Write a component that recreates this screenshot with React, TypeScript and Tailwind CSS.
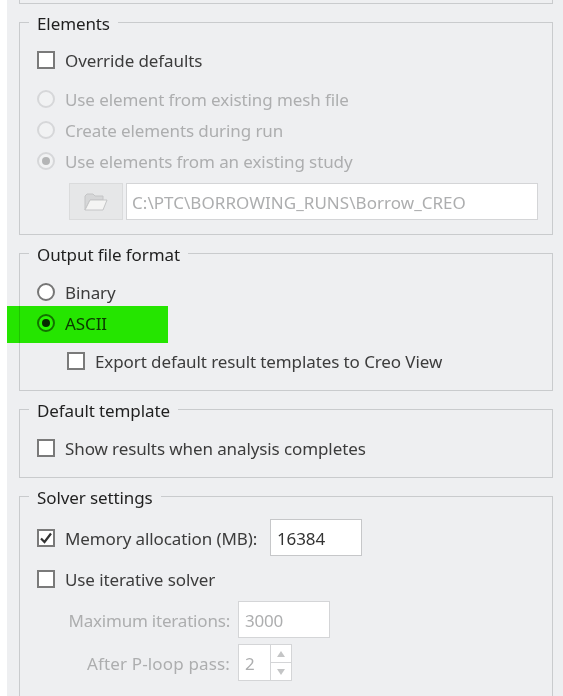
import type { ReactNode } from "react";

function Group({ title, className, children }: { title: string; className?: string; children: ReactNode }) {
  return (
    <fieldset className={`border border-[#c9cbcd] pl-[17px] pr-[14px] ${className ?? ""}`}>
      <legend className="ml-[-8px] h-[24px] px-[8px] pt-[2px] text-[17px] leading-[24px] tracking-[-0.1px] text-[#1f1f1f]">{title}</legend>
      {children}
    </fieldset>
  );
}

function CheckBox({ checked }: { checked?: boolean }) {
  return (
    <span className="flex h-[18px] w-[18px] shrink-0 items-center justify-center border-2 border-[#7a7a7a] bg-white">
      {checked && (
        <svg viewBox="0 0 14 14" className="h-[14px] w-[14px]" fill="none" stroke="#333" strokeWidth="2.2">
          <path d="M2 7.5 5.5 11 12 2.5" />
        </svg>
      )}
    </span>
  );
}

function Radio({ checked, disabled }: { checked?: boolean; disabled?: boolean }) {
  return (
    <span
      className={`flex h-[18px] w-[18px] shrink-0 items-center justify-center rounded-full border-2 ${
        disabled ? "border-[#d6d7d9] bg-[#f1f2f3]" : "border-[#767676] bg-white"
      }`}
    >
      {checked && <span className={`h-[8px] w-[8px] rounded-full ${disabled ? "bg-[#b4b5b6]" : "bg-[#2a2a2a]"}`} />}
    </span>
  );
}

function Row({ control, label, disabled, className }: { control: ReactNode; label: string; disabled?: boolean; className?: string }) {
  return (
    <div className={`flex h-[31px] items-center gap-[10px] text-[17px] tracking-[-0.1px] ${disabled ? "text-[#adaeaf]" : "text-[#3c3c3c]"} ${className ?? ""}`}>
      {control}
      <span className="pt-[3px]">{label}</span>
    </div>
  );
}

function FolderIcon() {
  return (
    <svg viewBox="0 0 26 20" className="h-[20px] w-[26px]">
      <path d="M2 18V4l2-2h6l2 2h8v4H7L2 18Z" fill="#d6d7d8" stroke="#c4c5c6" />
      <path d="M7 8h17l-4 10H2L7 8Z" fill="#f4f4f3" stroke="#c4c5c6" />
    </svg>
  );
}

export default function App() {
  return (
    <div className="h-[696px] w-[563px] overflow-hidden bg-white font-['Noto_Sans','Open_Sans',sans-serif]">
      <div className="relative ml-[7px] h-full bg-[#eeeff1] pl-[12px] pr-[10px]">
        {/* highlight painted over the ASCII row */}
        <div className="absolute left-0 top-[306px] h-[37px] w-[161px] bg-[#27f500] mix-blend-multiply" />

        <div className="h-[4px] border-x border-b border-[#c9cbcd]" />

        <Group title="Elements" className="mt-[6px] h-[225px]">
          <Row className="mt-[10px]" control={<CheckBox />} label="Override defaults" />
          <Row className="mt-[8px]" disabled control={<Radio disabled />} label="Use element from existing mesh file" />
          <Row disabled control={<Radio disabled />} label="Create elements during run" />
          <Row disabled control={<Radio disabled checked />} label="Use elements from an existing study" />
          <div className="ml-[32px] mt-[7px] flex h-[37px] gap-[3px]">
            <button className="flex w-[54px] items-center justify-center border border-[#dadbdc] bg-[#e6e7e8]">
              <FolderIcon />
            </button>
            <div className="flex flex-1 items-center border border-[#d4d5d7] bg-white px-[5px] pt-[2px] text-[17px] tracking-[0.04px] text-[#adaeaf]">
              C:\PTC\BORROWING_RUNS\Borrow_CREO
            </div>
          </div>
        </Group>

        <Group title="Output file format" className="mt-[6px] h-[150px]">
          <Row className="mt-[11px]" control={<Radio />} label="Binary" />
          <Row control={<Radio checked />} label="ASCII" />
          <Row className="ml-[30px] mt-[7px]" control={<CheckBox />} label="Export default result templates to Creo View" />
        </Group>

        <Group title="Default template" className="mt-[6px] h-[81px]">
          <Row className="mt-[11px]" control={<CheckBox />} label="Show results when analysis completes" />
        </Group>

        <Group title="Solver settings" className="mt-[6px] h-[300px]">
          <div className="mt-[11px] flex h-[37px] items-center gap-[10px] text-[17px] tracking-[-0.1px] text-[#3c3c3c]">
            <CheckBox checked />
            <span className="w-[195px] pt-[3px]">Memory allocation (MB):</span>
            <div className="flex h-[37px] w-[92px] items-center border border-[#c6c7c9] bg-white px-[6px] pt-[2px] text-[#333]">16384</div>
          </div>
          <Row className="mt-[7px]" control={<CheckBox />} label="Use iterative solver" />
          <div className="mt-[7px] flex h-[37px] items-center gap-[8px] text-[17px] tracking-[-0.2px] text-[#adaeaf]">
            <span className="w-[193px] pt-[3px] text-right">Maximum iterations:</span>
            <div className="flex h-[37px] w-[92px] items-center border border-[#d4d5d7] bg-white px-[6px] pt-[2px]">3000</div>
          </div>
          <div className="mt-[6px] flex h-[37px] items-center gap-[8px] text-[17px] tracking-[0.15px] text-[#adaeaf]">
            <span className="w-[193px] pt-[3px] text-right">After P-loop pass:</span>
            <div className="flex h-[37px] w-[54px] border border-[#d4d5d7] bg-white">
              <span className="flex w-[31px] items-center px-[6px] pt-[2px]">2</span>
              <div className="flex flex-1 flex-col border-l border-[#d4d5d7]">
                <span className="flex flex-1 items-center justify-center border-b border-[#d4d5d7]">
                  <svg viewBox="0 0 8 6" className="h-[6px] w-[8px]" fill="#c4c5c6"><path d="M4 0 8 6H0Z" /></svg>
                </span>
                <span className="flex flex-1 items-center justify-center">
                  <svg viewBox="0 0 8 6" className="h-[6px] w-[8px]" fill="#c4c5c6"><path d="M0 0h8L4 6Z" /></svg>
                </span>
              </div>
            </div>
          </div>
        </Group>
      </div>
    </div>
  );
}
